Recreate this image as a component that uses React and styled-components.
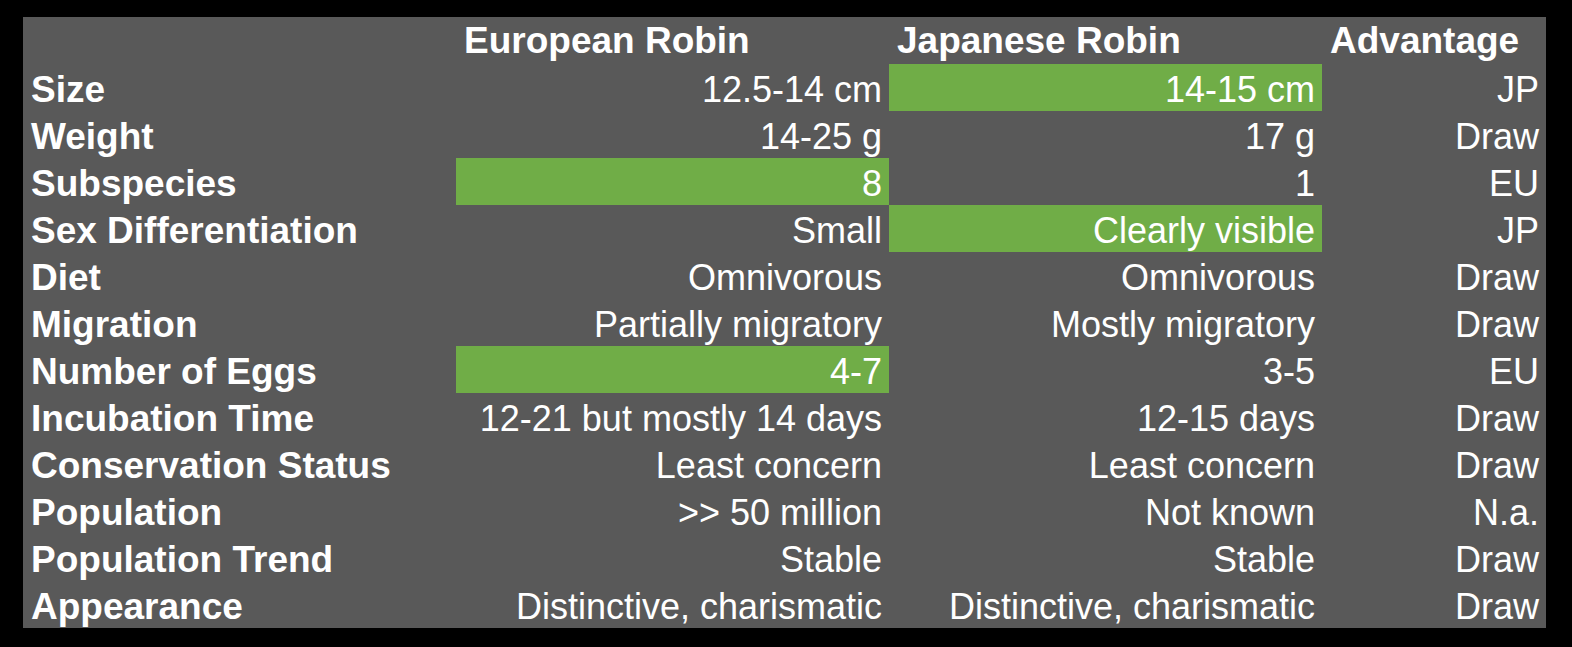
import styled, { createGlobalStyle } from "styled-components";

const GlobalStyle = createGlobalStyle`
  html, body {
    margin: 0;
    padding: 0;
    background: #000000;
  }
  body {
    font-family: "Liberation Sans", Arial, sans-serif;
  }
`;

const columns = ["European Robin", "Japanese Robin", "Advantage"];

const rows = [
  { label: "Size", eu: "12.5-14 cm", jp: "14-15 cm", adv: "JP", win: "jp" },
  { label: "Weight", eu: "14-25 g", jp: "17 g", adv: "Draw" },
  { label: "Subspecies", eu: "8", jp: "1", adv: "EU", win: "eu" },
  { label: "Sex Differentiation", eu: "Small", jp: "Clearly visible", adv: "JP", win: "jp" },
  { label: "Diet", eu: "Omnivorous", jp: "Omnivorous", adv: "Draw" },
  { label: "Migration", eu: "Partially migratory", jp: "Mostly migratory", adv: "Draw" },
  { label: "Number of Eggs", eu: "4-7", jp: "3-5", adv: "EU", win: "eu" },
  { label: "Incubation Time", eu: "12-21 but mostly 14 days", jp: "12-15 days", adv: "Draw" },
  { label: "Conservation Status", eu: "Least concern", jp: "Least concern", adv: "Draw" },
  { label: "Population", eu: ">> 50 million", jp: "Not known", adv: "N.a." },
  { label: "Population Trend", eu: "Stable", jp: "Stable", adv: "Draw" },
  { label: "Appearance", eu: "Distinctive, charismatic", jp: "Distinctive, charismatic", adv: "Draw" },
];

function App() {
  return (
    <>
      <GlobalStyle />
      <Page>
        <Sheet>
          <Cell />
          {columns.map((c) => (
            <HeadCell key={c}>{c}</HeadCell>
          ))}
          {rows.map((r) => (
            <Row key={r.label}>
              <LabelCell>{r.label}</LabelCell>
              <ValueCell $hi={r.win === "eu"}>{r.eu}</ValueCell>
              <ValueCell $hi={r.win === "jp"}>{r.jp}</ValueCell>
              <ValueCell $last>{r.adv}</ValueCell>
            </Row>
          ))}
        </Sheet>
      </Page>
    </>
  );
}

export default App;

const Page = styled.div`
  width: 1572px;
  height: 647px;
  padding: 17px 0 0 23px;
  box-sizing: border-box;
  background: #000000;
`;

const Sheet = styled.div`
  display: grid;
  grid-template-columns: 433px 433px 433px 224px;
  grid-auto-rows: 47px;
  width: 1523px;
  background: #595959;
  color: #ffffff;
  font-size: 36px;
`;

const Row = styled.div`
  display: contents;
`;

const Cell = styled.div`
  box-sizing: border-box;
  height: 47px;
  padding: 4px 7px 0;
  line-height: 43px;
  white-space: nowrap;
  overflow: hidden;
`;

const HeadCell = styled(Cell)`
  font-weight: 700;
  font-size: 37px;
  padding-top: 2px;
  padding-left: 8px;
`;

const LabelCell = styled(Cell)`
  font-weight: 700;
  font-size: 37px;
  padding-left: 8px;
`;

const ValueCell = styled(Cell)`
  text-align: right;
  background: ${(p) => (p.$hi ? "#70ad47" : "transparent")};
  padding-right: ${(p) => (p.$last ? "7px" : "7px")};
`;
